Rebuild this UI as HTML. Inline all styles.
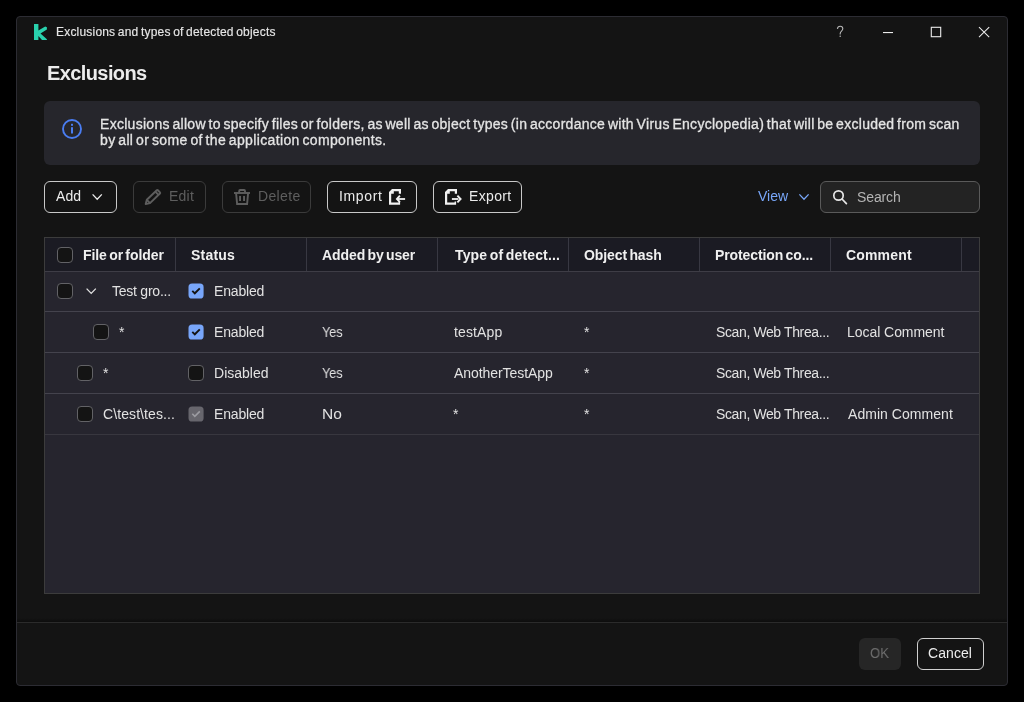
<!DOCTYPE html>
<html><head><meta charset="utf-8">
<style>
*{box-sizing:border-box;margin:0;padding:0}
html,body{width:1024px;height:702px;background:#000;overflow:hidden;font-family:"Liberation Sans",sans-serif;position:relative}
.a{position:absolute}
.t{position:absolute;white-space:nowrap;will-change:transform}
svg{position:absolute;overflow:visible}
.btn{position:absolute;top:181px;height:32px;border:1px solid #c9c9c9;border-radius:6px}
.btn.dis{border-color:#3b3b3b}
.vs{position:absolute;top:238px;width:1px;height:33px;background:#383842}
.hl{position:absolute;left:45px;width:934px;height:1px;background:#44434d}
.cb{position:absolute;width:16px;height:16px;border:1px solid #626266;border-radius:4px;background:#141414}
.cb.on{background:#78a6fa;border:0;width:15px;height:15px;border-radius:3.5px;margin:0.5px 0 0 0.5px}
.cb.gr{background:#67666d;border:0;width:15px;height:15px;border-radius:3.5px;margin:0.5px 0 0 0.5px}
</style></head><body>
<div class="a" style="left:16px;top:16px;width:992px;height:670px;background:#141414;border:1px solid #2c2c33;border-radius:4px"></div>
<!-- logo -->
<svg style="left:0;top:0" width="1024" height="702"><path d="M34 24H38.4V30.6L45.2 26.6L46.9 27.3V29.5L40.5 33.6L46.9 39.2V40H42L38.4 36.1V40H34Z" fill="#29d1ad"/></svg>
<!-- title controls -->
<svg style="left:0;top:0" width="1024" height="702">
<path d="M837.4 28.9C837.6 27.3 838.7 26.3 840.2 26.3C841.7 26.3 842.8 27.3 842.8 28.7C842.8 30.8 840.2 31.3 840.2 33.4V34.4" fill="none" stroke="#b8b8b8" stroke-width="1.1"/>
<circle cx="840.2" cy="36.3" r="0.75" fill="#b8b8b8"/>
<rect x="883" y="32" width="10" height="1.1" fill="#ebebeb"/>
<rect x="931.3" y="27.3" width="9.4" height="9.4" fill="none" stroke="#ebebeb" stroke-width="1.1"/>
<path d="M979 27.2L989.2 37.2M989.2 27.2L979 37.2" stroke="#ebebeb" stroke-width="1.05"/>
</svg>
<!-- info box -->
<div class="a" style="left:44px;top:101px;width:936px;height:64px;background:#26262c;border-radius:6px"></div>
<svg style="left:0;top:0" width="1024" height="702">
<circle cx="72" cy="129" r="9" fill="none" stroke="#4a7df2" stroke-width="1.9"/>
<rect x="71" y="127.2" width="2" height="6.3" fill="#4a7df2"/>
<rect x="71" y="123.8" width="2" height="2" fill="#4a7df2"/>
</svg>
<!-- toolbar -->
<div class="btn" style="left:44px;width:73px"></div>
<div class="btn dis" style="left:133px;width:73px"></div>
<div class="btn dis" style="left:222px;width:89px"></div>
<div class="btn" style="left:327px;width:90px"></div>
<div class="btn" style="left:433px;width:89px"></div>
<div class="a" style="left:820px;top:181px;width:160px;height:32px;background:#232323;border:1px solid #5a5a5a;border-radius:6px"></div>
<svg style="left:0;top:0" width="1024" height="702">
<!-- add chevron -->
<path d="M92.6 194.4L97.2 199.2L101.8 194.4" fill="none" stroke="#ececec" stroke-width="1.3"/>
<!-- view chevron -->
<path d="M799.4 194.4L804 199.2L808.6 194.4" fill="none" stroke="#78a6f8" stroke-width="1.3"/>
<!-- pencil -->
<g transform="translate(152.3 197.7) rotate(-44)" fill="none" stroke="#5e5e5e" stroke-width="1.9">
<path d="M-9.2 0L-5.4 -2.3H8.4Q9.2 -2.3 9.2 -1.5V1.5Q9.2 2.3 8.4 2.3H-5.4Z" stroke-linejoin="round"/>
<path d="M-5.4 -2.3V2.3M6.4 -2.3V2.3"/>
</g>
<!-- trash -->
<g fill="none" stroke="#5e5e5e" stroke-width="1.9">
<path d="M234 193H250"/>
<path d="M239.2 192.6V190.9Q239.2 190 240.1 190H244.1Q245 190 245 190.9V192.6"/>
<path d="M236.1 193.2L237.1 204H247.1L248.1 193.2"/>
</g>
<rect x="239.1" y="195.9" width="1.9" height="5.1" fill="#5e5e5e"/>
<rect x="243.1" y="195.9" width="1.9" height="5.1" fill="#5e5e5e"/>
<!-- import icon -->
<path fill="#f0f0f0" fill-rule="evenodd" d="M389 192L392 189H401V193.8H398.8V191.2H393.8V193.8H391.2V202.5H398.6V201.4H400.1V204.7H389Z"/>
<rect x="398" y="198.1" width="7.1" height="1.8" fill="#f0f0f0"/>
<path d="M399.9 195.6L396.9 199L399.9 202.2" fill="none" stroke="#f0f0f0" stroke-width="1.9"/>
<!-- export icon -->
<path fill="#f0f0f0" fill-rule="evenodd" d="M445 192L448 189H457V193.8H454.8V191.2H449.8V193.8H447.2V202.5H454.6V201.4H456.1V204.7H445Z"/>
<rect x="451.9" y="198.1" width="6.5" height="1.8" fill="#f0f0f0"/>
<path d="M457.4 195.6L460.6 199L457.4 202.4" fill="none" stroke="#f0f0f0" stroke-width="1.9"/>
<!-- search icon -->
<circle cx="838.5" cy="195.5" r="4.7" fill="none" stroke="#e6e6e6" stroke-width="1.7"/>
<path d="M842 199L846.4 203.6" stroke="#e6e6e6" stroke-width="1.7" stroke-linecap="round"/>
</svg>
<!-- table -->
<div class="a" style="left:44px;top:237px;width:936px;height:357px;background:#26252e;border:1px solid #3c3c3c"></div>
<div class="a" style="left:45px;top:238px;width:934px;height:33px;background:#1b1b23"></div>
<div class="hl" style="top:271px;background:#3e3d46"></div>
<div class="hl" style="top:311px"></div>
<div class="hl" style="top:352px"></div>
<div class="hl" style="top:393px"></div>
<div class="hl" style="top:434px;background:#38373f"></div>
<div class="vs" style="left:175px"></div>
<div class="vs" style="left:306px"></div>
<div class="vs" style="left:437px"></div>
<div class="vs" style="left:568px"></div>
<div class="vs" style="left:699px"></div>
<div class="vs" style="left:830px"></div>
<div class="vs" style="left:961px"></div>
<div class="cb" style="left:57px;top:247px"></div>
<div class="cb" style="left:57px;top:283px"></div>
<div class="cb" style="left:93px;top:324px"></div>
<div class="cb" style="left:77px;top:365px"></div>
<div class="cb" style="left:77px;top:406px"></div>


<div class="cb" style="left:188px;top:365px"></div>

<svg style="left:0;top:0" width="1024" height="702">
<rect x="188.5" y="283.4" width="15.1" height="15.1" rx="3.6" fill="#78a6fa"/>
<rect x="188.5" y="324.4" width="15.1" height="15.1" rx="3.6" fill="#78a6fa"/>
<rect x="188.5" y="406.4" width="15.1" height="15.1" rx="3.6" fill="#67666d"/>
<path d="M86.6 288.6L91.2 293.4L95.8 288.6" fill="none" stroke="#e2e2e2" stroke-width="1.3"/>
<path d="M192.3 290.8L194.8 293.3L199.8 288.4" fill="none" stroke="#141414" stroke-width="1.9"/>
<path d="M192.3 331.8L194.8 334.3L199.8 329.4" fill="none" stroke="#141414" stroke-width="1.9"/>
<path d="M192.3 413.8L194.8 416.3L199.8 411.4" fill="none" stroke="#9c9ca2" stroke-width="1.6"/>
</svg>
<!-- footer -->
<div class="a" style="left:17px;top:618px;width:990px;height:4px;background:linear-gradient(rgba(0,0,0,0),rgba(0,0,0,0.35))"></div>
<div class="a" style="left:17px;top:622px;width:990px;height:1px;background:#2b2b2b"></div>
<div class="a" style="left:859px;top:638px;width:42px;height:32px;background:#262626;border-radius:6px"></div>
<div class="a" style="left:917px;top:638px;width:67px;height:32px;border:1px solid #d0d0d0;border-radius:6px"></div>
<div class="t" id="title" style="left:55.60px;top:25px;font-size:12px;line-height:14px;color:#e6e6e6;letter-spacing:0.196px;word-spacing:-1.0px;-webkit-text-stroke:0.15px #e6e6e6">Exclusions and types of detected objects</div>
<div class="t" id="head" style="left:47.20px;top:62px;font-size:20px;line-height:22px;color:#ececec;font-weight:bold;letter-spacing:-0.599px">Exclusions</div>
<div class="t" id="info1" style="left:99.80px;top:116px;font-size:14px;line-height:16px;color:#e4e4e4;letter-spacing:0.290px;word-spacing:-1.5px;-webkit-text-stroke:0.3px #e4e4e4">Exclusions allow to specify files or folders, as well as object types (in accordance with Virus Encyclopedia) that will be excluded from scan</div>
<div class="t" id="info2" style="left:99.80px;top:132px;font-size:14px;line-height:16px;color:#e4e4e4;letter-spacing:0.358px;word-spacing:-1.5px;-webkit-text-stroke:0.3px #e4e4e4">by all or some of the application components.</div>
<div class="t" id="add" style="left:56.00px;top:188px;font-size:14px;line-height:16px;color:#ececec;letter-spacing:0.100px">Add</div>
<div class="t" id="edit" style="left:168.60px;top:188px;font-size:14px;line-height:16px;color:#5e5e5e;letter-spacing:0.231px">Edit</div>
<div class="t" id="delete" style="left:257.60px;top:188px;font-size:14px;line-height:16px;color:#5e5e5e;letter-spacing:0.360px">Delete</div>
<div class="t" id="import" style="left:338.60px;top:188px;font-size:14px;line-height:16px;color:#ececec;letter-spacing:0.640px">Import</div>
<div class="t" id="export" style="left:468.60px;top:188px;font-size:14px;line-height:16px;color:#ececec;letter-spacing:0.340px">Export</div>
<div class="t" id="view" style="left:758.20px;top:188px;font-size:14px;line-height:16px;color:#78a6f8">View</div>
<div class="t" id="search" style="left:857.40px;top:189px;font-size:14px;line-height:16px;color:#b4b4b4;letter-spacing:-0.120px">Search</div>
<div class="t" id="h1" style="left:82.80px;top:247px;font-size:14px;line-height:16px;color:#f0f0f0;font-weight:bold;letter-spacing:-0.070px;word-spacing:-1.5px">File or folder</div>
<div class="t" id="h2" style="left:190.80px;top:247px;font-size:14px;line-height:16px;color:#f0f0f0;font-weight:bold;letter-spacing:0.200px">Status</div>
<div class="t" id="h3" style="left:322.40px;top:247px;font-size:14px;line-height:16px;color:#f0f0f0;font-weight:bold;letter-spacing:-0.083px;word-spacing:-1.5px">Added by user</div>
<div class="t" id="h4" style="left:454.60px;top:247px;font-size:14px;line-height:16px;color:#f0f0f0;font-weight:bold;letter-spacing:0.144px;word-spacing:-1.5px">Type of detect...</div>
<div class="t" id="h5" style="left:584.20px;top:247px;font-size:14px;line-height:16px;color:#f0f0f0;font-weight:bold;letter-spacing:-0.080px;word-spacing:-1.5px">Object hash</div>
<div class="t" id="h6" style="left:715.20px;top:247px;font-size:14px;line-height:16px;color:#f0f0f0;font-weight:bold;letter-spacing:-0.100px;word-spacing:-1.5px">Protection co...</div>
<div class="t" id="h7" style="left:845.80px;top:247px;font-size:14px;line-height:16px;color:#f0f0f0;font-weight:bold;letter-spacing:0.166px">Comment</div>
<div class="t" id="r1a" style="left:112.00px;top:283px;font-size:14px;line-height:16px;color:#e2e2e2;letter-spacing:-0.240px">Test gro...</div>
<div class="t" id="r1b" style="left:213.80px;top:283px;font-size:14px;line-height:16px;color:#e2e2e2;letter-spacing:-0.166px">Enabled</div>
<div class="t" id="r2a" style="left:118.80px;top:324px;font-size:14px;line-height:16px;color:#e2e2e2">*</div>
<div class="t" id="r2b" style="left:213.80px;top:324px;font-size:14px;line-height:16px;color:#e2e2e2;letter-spacing:-0.166px">Enabled</div>
<div class="t" id="r2c" style="left:322.20px;top:324px;font-size:14px;line-height:16px;color:#e2e2e2;transform:scaleX(0.903);transform-origin:0 0">Yes</div>
<div class="t" id="r2d" style="left:454.20px;top:324px;font-size:14px;line-height:16px;color:#e2e2e2;letter-spacing:0.135px">testApp</div>
<div class="t" id="r2e" style="left:584.20px;top:324px;font-size:14px;line-height:16px;color:#e2e2e2">*</div>
<div class="t" id="r2f" style="left:715.80px;top:324px;font-size:14px;line-height:16px;color:#e2e2e2;letter-spacing:-0.383px">Scan, Web Threa...</div>
<div class="t" id="r2g" style="left:846.60px;top:324px;font-size:14px;line-height:16px;color:#e2e2e2;letter-spacing:-0.049px">Local Comment</div>
<div class="t" id="r3a" style="left:102.60px;top:365px;font-size:14px;line-height:16px;color:#e2e2e2">*</div>
<div class="t" id="r3b" style="left:213.80px;top:365px;font-size:14px;line-height:16px;color:#e2e2e2;letter-spacing:0.015px">Disabled</div>
<div class="t" id="r3c" style="left:322.20px;top:365px;font-size:14px;line-height:16px;color:#e2e2e2;transform:scaleX(0.903);transform-origin:0 0">Yes</div>
<div class="t" id="r3d" style="left:454.20px;top:365px;font-size:14px;line-height:16px;color:#e2e2e2;letter-spacing:-0.063px">AnotherTestApp</div>
<div class="t" id="r3e" style="left:584.20px;top:365px;font-size:14px;line-height:16px;color:#e2e2e2">*</div>
<div class="t" id="r3f" style="left:715.80px;top:365px;font-size:14px;line-height:16px;color:#e2e2e2;letter-spacing:-0.383px">Scan, Web Threa...</div>
<div class="t" id="r4a" style="left:102.60px;top:406px;font-size:14px;line-height:16px;color:#e2e2e2;letter-spacing:0.092px">C\test\tes...</div>
<div class="t" id="r4b" style="left:213.80px;top:406px;font-size:14px;line-height:16px;color:#e2e2e2;letter-spacing:-0.166px">Enabled</div>
<div class="t" id="r4c" style="left:322.20px;top:406px;font-size:14px;line-height:16px;color:#e2e2e2;transform:scaleX(1.109);transform-origin:0 0">No</div>
<div class="t" id="r4d" style="left:453.20px;top:406px;font-size:14px;line-height:16px;color:#e2e2e2">*</div>
<div class="t" id="r4e" style="left:584.20px;top:406px;font-size:14px;line-height:16px;color:#e2e2e2">*</div>
<div class="t" id="r4f" style="left:715.80px;top:406px;font-size:14px;line-height:16px;color:#e2e2e2;letter-spacing:-0.383px">Scan, Web Threa...</div>
<div class="t" id="r4g" style="left:847.60px;top:406px;font-size:14px;line-height:16px;color:#e2e2e2;letter-spacing:0.049px">Admin Comment</div>
<div class="t" id="ok" style="left:870.40px;top:645px;font-size:14px;line-height:16px;color:#6e6e6e;transform:scaleX(0.932);transform-origin:0 0">OK</div>
<div class="t" id="cancel" style="left:928.00px;top:645px;font-size:14px;line-height:16px;color:#ececec;letter-spacing:0.080px">Cancel</div>
</body></html>
